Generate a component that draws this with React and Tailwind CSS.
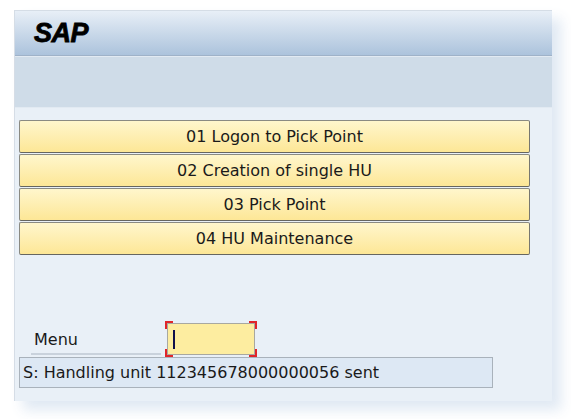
const menuItems = [
  "01 Logon to Pick Point",
  "02 Creation of single HU",
  "03 Pick Point",
  "04 HU Maintenance",
];

const Corner = ({ className }) => (
  <span className={`absolute w-[8px] h-[8px] border-[#e0262a] ${className}`} />
);

const App = () => {
  return (
    <div className="w-[571px] h-[419px] bg-white overflow-hidden pt-[10px] pl-[14px] font-['DejaVu_Sans',sans-serif]">
      <div className="w-[538px] h-[391px] bg-[#e9f0f7] border-l border-t border-[#d5dde6] shadow-[9px_9px_12px_rgba(222,232,242,0.95)] flex flex-col">
        {/* title bar */}
        <div className="h-[45px] bg-gradient-to-b from-[#e8eff7] to-[#acc3dc] border-b border-[#9fb2c8] flex items-center pl-[19px]">
          <span className="text-[27px] font-bold italic text-black tracking-[-0.5px] font-['Liberation_Sans',sans-serif] [-webkit-text-stroke:0.8px_black]">
            SAP
          </span>
        </div>
        {/* toolbar */}
        <div className="h-[52px] bg-[#cfdce8] border-t border-[#e2eaf2] border-b border-[#aebdcc]" />
        {/* content */}
        <div className="flex-1 pt-[12px] pl-[4px]">
          <div className="flex flex-col gap-px w-[511px]">
            {menuItems.map((item) => (
              <button
                key={item}
                className="h-[33px] rounded-[2px] border border-[#8a8a82] border-b-[#666660] border-r-[#777770] bg-gradient-to-b from-[#fff6cc] to-[#fde796] text-[16px] text-[#1a1a1a] leading-none"
              >
                {item}
              </button>
            ))}
          </div>

          <div className="mt-[66px] flex items-end">
            <div className="w-[130px] ml-[12px] border-b-2 border-[#c9d2dc] pl-[3px] pb-[2px] text-[16px] text-[#1a1a1a] leading-[22px]">
              Menu
            </div>
            <div className="relative ml-[4px] mb-[-2px] w-[92px] h-[36px] p-[2px]">
              <Corner className="top-0 left-0 border-t-2 border-l-2" />
              <Corner className="top-0 right-0 border-t-2 border-r-2" />
              <Corner className="bottom-0 left-0 border-b-2 border-l-2" />
              <Corner className="bottom-0 right-0 border-b-2 border-r-2" />
              <div className="w-full h-full bg-[#fdeda0] border border-[#a8a8a0] flex items-center pl-[5px]">
                <span className="w-[2px] h-[19px] bg-[#10104a]" />
              </div>
            </div>
          </div>

          <div className="mt-[2px] w-[474px] h-[31px] bg-[#dde8f4] border border-[#a9b2bb] flex items-center pl-[3px] text-[16px] text-[#1a1a1a]">
            S: Handling unit 112345678000000056 sent
          </div>
        </div>
      </div>
    </div>
  );
};

export default App;
